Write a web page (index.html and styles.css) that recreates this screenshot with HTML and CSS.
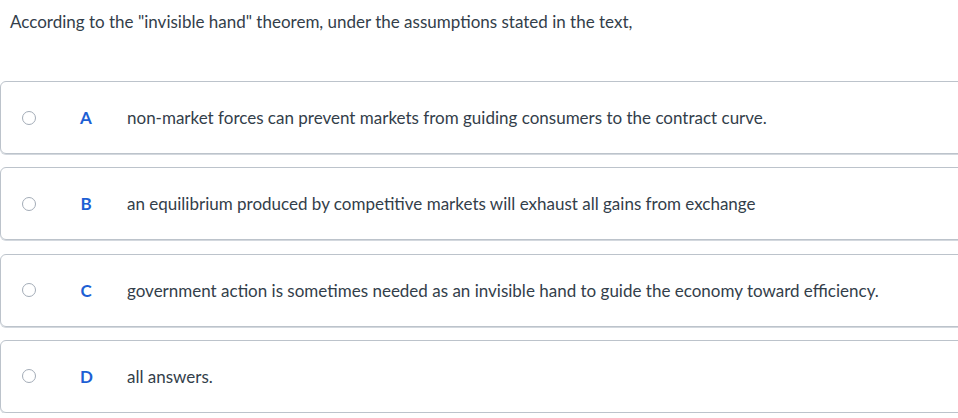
FILE: index.html
```html
<!DOCTYPE html>
<html lang="en">
<head>
<meta charset="utf-8">
<title>Question</title>
<link rel="stylesheet" href="styles.css">
</head>
<body>
<div class="page">
  <p class="question">According to the "invisible hand" theorem, under the assumptions stated in the text,</p>
  <div class="options">
    <div class="option">
      <span class="radio"></span>
      <span class="letter">A</span>
      <span class="answer">non-market forces can prevent markets from guiding consumers to the contract curve.</span>
    </div>
    <div class="option">
      <span class="radio"></span>
      <span class="letter">B</span>
      <span class="answer">an equilibrium produced by competitive markets will exhaust all gains from exchange</span>
    </div>
    <div class="option">
      <span class="radio"></span>
      <span class="letter">C</span>
      <span class="answer">government action is sometimes needed as an invisible hand to guide the economy toward efficiency.</span>
    </div>
    <div class="option">
      <span class="radio"></span>
      <span class="letter">D</span>
      <span class="answer">all answers.</span>
    </div>
  </div>
</div>
</body>
</html>
```
FILE: styles.css
```css
html, body {
  margin: 0;
  padding: 0;
  background: #ffffff;
  overflow: hidden;
}
body {
  font-family: "Lato", "Open Sans", "Liberation Sans", sans-serif;
  font-size: 17px;
  color: #333e4a;
}
.page {
  width: 958px;
  overflow: hidden;
}
.question {
  margin: 0;
  padding: 11px 0 0 10px;
  height: 70px;
  line-height: 22px;
  box-sizing: border-box;
}
.options {
  display: flex;
  flex-direction: column;
  gap: 13.33px;
  padding-top: 11px;
  margin-right: -12px;
}
.option {
  height: 73px;
  box-sizing: border-box;
  border: 1px solid #bcc3cb;
  border-radius: 6px;
  box-shadow: 0 1px 0 #d3d8de;
  display: flex;
  align-items: center;
  padding-left: 21px;
}
.radio {
  width: 14px;
  height: 14px;
  box-sizing: border-box;
  border: 1.5px solid #a3acb7;
  border-radius: 50%;
  flex: none;
}
.letter {
  width: 12px;
  margin-left: 44px;
  font-weight: 700;
  color: #1d5fd4;
  flex: none;
  text-align: center;
}
.answer {
  margin-left: 35px;
  white-space: nowrap;
}
```
